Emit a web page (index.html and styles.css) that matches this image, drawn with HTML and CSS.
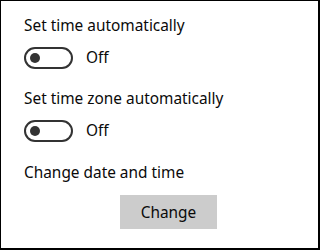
FILE: index.html
```html
<!DOCTYPE html>
<html>
<head>
<meta charset="utf-8">
<link rel="stylesheet" href="styles.css">
</head>
<body>
<div class="frame">
  <div class="label first">Set time automatically</div>
  <div class="row">
    <span class="toggle"><span class="knob"></span></span>
    <span class="state">Off</span>
  </div>
  <div class="label second">Set time zone automatically</div>
  <div class="row">
    <span class="toggle"><span class="knob"></span></span>
    <span class="state">Off</span>
  </div>
  <div class="label third">Change date and time</div>
  <div class="btnrow"><button class="btn">Change</button></div>
</div>
</body>
</html>
```
FILE: styles.css
```css
html, body {
  margin: 0;
  padding: 0;
  background: #fff;
}
.frame {
  box-sizing: border-box;
  width: 320px;
  height: 250px;
  border-style: solid;
  border-color: #000;
  border-width: 1px 2px 2px 1px;
  padding: 15px 0 0 23px;
  font-family: "Noto Sans", "Open Sans", sans-serif;
  font-size: 15.4px;
  color: #0a0a0a;
}
.label {
  line-height: 20px;
  height: 20px;
}
.second { margin-top: 20px; }
.third { margin-top: 21px; }
.row {
  display: flex;
  align-items: center;
  margin-top: 11px;
  height: 22px;
}
.toggle {
  box-sizing: border-box;
  width: 49px;
  height: 22px;
  border: 2px solid #333;
  border-radius: 11px;
  display: flex;
  align-items: center;
  padding-left: 4px;
}
.knob {
  width: 10px;
  height: 10px;
  border-radius: 50%;
  background: #333;
}
.state {
  margin-left: 13px;
  line-height: 20px;
}
.btnrow {
  margin-top: 12px;
  padding-left: 96px;
}
.btn {
  width: 97px;
  height: 34px;
  border: none;
  background: #ccc;
  font-family: inherit;
  font-size: 15.4px;
  color: #0a0a0a;
  padding: 0;
}
```
